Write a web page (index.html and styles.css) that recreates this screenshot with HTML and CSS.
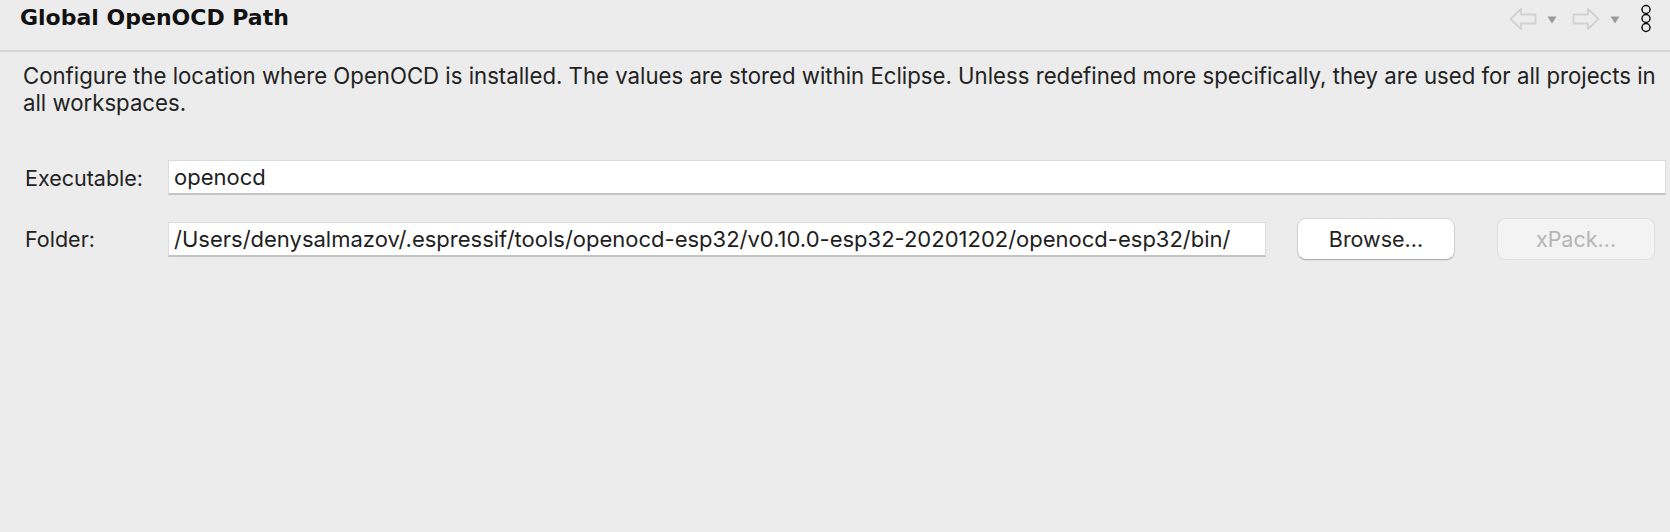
FILE: index.html
```html
<!DOCTYPE html>
<html>
<head>
<meta charset="utf-8">
<link rel="stylesheet" href="styles.css">
</head>
<body>
<div class="page">
  <header class="head">
    <h1 class="title">Global OpenOCD Path</h1>
    <div class="tools">
      <svg class="arrow" width="28" height="24" viewBox="0 0 28 24"><path d="M1.5 12 L12 2 L12 7.5 L26.5 7.5 L26.5 16.5 L12 16.5 L12 22 Z" fill="none" stroke="#d2d2d2" stroke-width="1.8" stroke-linejoin="round"/></svg>
      <svg class="drop" width="10" height="8" viewBox="0 0 10 8"><path d="M0.5 0.5 L9.5 0.5 L5 7.5 Z" fill="#9b9b9b"/></svg>
      <svg class="arrow fwd" width="28" height="24" viewBox="0 0 28 24"><path d="M26.5 12 L16 2 L16 7.5 L1.5 7.5 L1.5 16.5 L16 16.5 L16 22 Z" fill="none" stroke="#d2d2d2" stroke-width="1.8" stroke-linejoin="round"/></svg>
      <svg class="drop" width="10" height="8" viewBox="0 0 10 8"><path d="M0.5 0.5 L9.5 0.5 L5 7.5 Z" fill="#9b9b9b"/></svg>
      <svg class="more" width="12" height="30" viewBox="0 0 12 30"><circle cx="6" cy="5.5" r="4" fill="none" stroke="#111" stroke-width="1.5"/><circle cx="6" cy="14.5" r="4" fill="none" stroke="#111" stroke-width="1.5"/><circle cx="6" cy="23.5" r="4" fill="none" stroke="#111" stroke-width="1.5"/></svg>
    </div>
  </header>
  <main class="content">
    <p class="desc">Configure the location where OpenOCD is installed. The values are stored within Eclipse. Unless redefined more specifically, they are used for all projects in all workspaces.</p>
    <div class="row row-exe">
      <label class="label">Executable:</label>
      <div class="field">openocd</div>
    </div>
    <div class="row row-folder">
      <label class="label">Folder:</label>
      <div class="field">/Users/denysalmazov/.espressif/tools/openocd-esp32/v0.10.0-esp32-20201202/openocd-esp32/bin/</div>
      <button class="btn">Browse...</button>
      <button class="btn disabled">xPack...</button>
    </div>
  </main>
</div>
</body>
</html>
```
FILE: styles.css
```css
html, body {
  margin: 0;
  padding: 0;
  background: #ececec;
}
.page {
  width: 1670px;
  height: 532px;
  background: #ececec;
  font-family: Inter, "Liberation Sans", sans-serif;
  color: #222;
}
.head {
  height: 50px;
  border-bottom: 2px solid #d5d5d5;
  display: flex;
  align-items: flex-start;
  justify-content: space-between;
  box-sizing: content-box;
}
.title {
  margin: 0;
  padding: 3px 0 0 20px;
  font-family: "DejaVu Sans", sans-serif;
  font-weight: bold;
  font-size: 22px;
  line-height: 30px;
  color: #111;
}
.tools {
  display: flex;
  align-items: center;
  padding: 5px 18px 0 0;
  height: 28px;
}
.arrow { margin-right: 10px; }
.drop { margin-right: 14px; margin-top: 2px; }
.arrow.fwd { margin-left: 1px; }
.more { margin-left: 6px; }
.content {
  padding: 10px 4px 0 23px;
}
.desc {
  margin: 0;
  font-size: 22.2px;
  line-height: 27px;
  color: #222;
}
.row {
  display: flex;
  align-items: center;
}
.row-exe { margin-top: 44px; }
.row-folder { margin-top: 24px; }
.label {
  width: 143px;
  flex: none;
  font-size: 21.5px;
  color: #222;
  padding-left: 2px;
}
.field {
  flex: 1;
  height: 35px;
  box-sizing: border-box;
  background: #fff;
  border: 1px solid #dcdcdc;
  border-bottom: 2px solid #c4c4c4;
  font-size: 22px;
  line-height: 32px;
  padding: 0 5px;
  color: #1e1e1e;
  white-space: nowrap;
  overflow: hidden;
}
.row-folder .field { flex: none; width: 1098px; }
.btn {
  flex: none;
  width: 156px;
  height: 40px;
  margin-left: 32px;
  border: none;
  border-radius: 8px;
  background: #fff;
  box-shadow: 0 0 0 1px rgba(0,0,0,0.08), 0 1px 1.5px rgba(0,0,0,0.25);
  font-family: Inter, "Liberation Sans", sans-serif;
  font-size: 21.5px;
  color: #222;
}
.btn.disabled {
  margin-left: 44px;
  background: #f3f3f3;
  color: #b5b5b5;
  box-shadow: 0 0 0 1px rgba(0,0,0,0.05);
}
```
